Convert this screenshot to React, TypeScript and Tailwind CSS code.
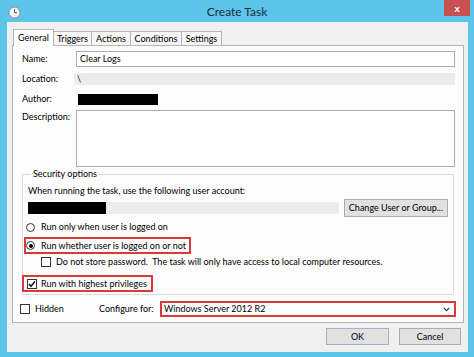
import { JSX } from "react";

function ClockIcon(): JSX.Element {
  return (
    <svg width="13" height="13" viewBox="0 0 13 13">
      <circle cx="6.5" cy="6.5" r="5.5" fill="#f4f4f4" stroke="#8a8a8a" strokeWidth="1" />
      <path d="M6.5 3.2 V6.7 H9" fill="none" stroke="#5a5a5a" strokeWidth="1" />
    </svg>
  );
}

function Radio({ checked }: { checked?: boolean }): JSX.Element {
  return (
    <span className="w-[9px] h-[9px] rounded-full border border-[#333] bg-white flex items-center justify-center shrink-0">
      {checked && <span className="w-[4px] h-[4px] rounded-full bg-black" />}
    </span>
  );
}

function Check({ checked }: { checked?: boolean }): JSX.Element {
  return (
    <span className="w-[10px] h-[10px] border border-[#333] bg-white flex items-center justify-center shrink-0">
      {checked && (
        <svg width="8" height="8" viewBox="0 0 8 8">
          <path d="M1 4 L3 6.3 L7 1.2" fill="none" stroke="#111" strokeWidth="1.4" />
        </svg>
      )}
    </span>
  );
}

export default function App(): JSX.Element {
  const tabs = [
    { label: "Triggers", w: "w-[39px]" },
    { label: "Actions", w: "w-[40px]" },
    { label: "Conditions", w: "w-[52px]" },
    { label: "Settings", w: "w-[41px]" },
  ];

  return (
    <div className="w-[474px] h-[357px] bg-[#5cc5e9] flex flex-col font-['Lato',sans-serif] text-[9px] text-black leading-[12px] whitespace-nowrap">
      {/* title bar */}
      <div className="h-[22px] grid grid-cols-[1fr_auto_1fr] items-start">
        <div className="pl-[8px] pt-[6px]">
          <ClockIcon />
        </div>
        <div className="pt-[4px] text-[12px] leading-[16px] text-[#1e2b38]">Create Task</div>
        <div className="flex justify-end pr-[4px]">
          <div className="w-[26px] h-[16px] bg-[#c75050] flex items-center justify-center text-white text-[10px] font-bold leading-none">
            x
          </div>
        </div>
      </div>

      {/* window body */}
      <div className="ml-[7px] mr-[6px] mb-[5px] flex-1 bg-[#f0f0f0] flex flex-col">
        {/* tabs */}
        <div className="flex items-end pl-[6px] pt-[6px] h-[23px]">
          <div className="w-[41px] h-[17px] bg-white border border-b-0 border-[#b4b4b4] flex items-center justify-center relative z-10 -mb-[1px]">
            General
          </div>
          {tabs.map((t) => (
            <div
              key={t.label}
              className={`${t.w} h-[14px] bg-[#f6f6f6] border border-b-0 border-[#b4b4b4] flex items-center justify-center -ml-[1px]`}
            >
              {t.label}
            </div>
          ))}
        </div>

        {/* tab panel */}
        <div className="ml-[5px] mr-[4px] h-[278px] bg-[#fcfcfc] border border-[#b4b4b4] flex flex-col pt-[5px]">
          <div className="grid grid-cols-[54px_1fr] pl-[9px] pr-[8px] gap-y-[6px]">
            <div className="flex items-center">Name:</div>
            <div className="h-[16px] bg-white border border-[#acacac] flex items-center pl-[3px]">Clear Logs</div>

            <div className="flex items-center">Location:</div>
            <div className="h-[12px] bg-[#ececec] -ml-[2px] flex items-center pl-[3px]">\</div>

            <div className="flex items-center h-[14px] mt-[1px]">Author:</div>
            <div className="h-[14px] mt-[1px] flex items-center pl-[2px]">
              <div className="w-[80px] h-[11px] bg-black" />
            </div>

            <div className="-mt-[2px] pt-[1px]">Description:</div>
            <div className="h-[57px] -mt-[2px] bg-white border border-[#acacac]" />
          </div>

          {/* security options */}
          <fieldset className="mx-[9px] mt-[1px] border border-[#dcdcdc] pl-[5px] pr-[5px] pb-[2px]">
            <legend className="ml-[3px] px-[2px]">Security options</legend>
            <div className="mt-[5px]">When running the task, use the following user account:</div>
            <div className="mt-[2px] h-[18px] flex items-center gap-[5px]">
              <div className="w-[311px] h-[12px] bg-[#ececec]">
                <div className="w-[78px] h-[12px] bg-black" />
              </div>
              <div className="w-[104px] h-[18px] bg-[#e1e1e1] border border-[#acacac] flex items-center justify-center">
                Change User or Group...
              </div>
            </div>
            <div className="mt-[3px] h-[14px] flex items-center gap-[6px] -ml-[2px]">
              <Radio />
              <span>Run only when user is logged on</span>
            </div>
            <div className="mt-[3px] h-[17px] w-fit -ml-[4px] pr-[3px] border-2 border-[#d9393b] flex items-center gap-[6px]">
              <Radio checked />
              <span>Run whether user is logged on or not</span>
            </div>
            <div className="mt-[2px] h-[12px] flex items-center gap-[5px] pl-[13px]">
              <Check />
              <span>Do not store password.&nbsp; The task will only have access to local computer resources.</span>
            </div>
            <div className="mt-[7px] h-[17px] w-fit -ml-[6px] pr-[4px] border-2 border-[#d9393b] flex items-center gap-[4px] pl-[3px]">
              <Check checked />
              <span>Run with highest privileges</span>
            </div>
          </fieldset>

          {/* bottom row */}
          <div className="mt-[6px] pl-[7px] pr-[7px] h-[16px] flex items-center">
            <Check />
            <span className="ml-[5px] w-[64px]">Hidden</span>
            <span className="w-[61px]">Configure for:</span>
            <div className="flex-1 h-[16px] bg-white border-2 border-[#d9393b] flex items-center justify-between pl-[2px] pr-[4px]">
              <span>Windows Server 2012 R2</span>
              <svg width="7" height="5" viewBox="0 0 7 5">
                <path d="M0.8 0.8 L3.5 3.6 L6.2 0.8" fill="none" stroke="#333" strokeWidth="1.1" />
              </svg>
            </div>
          </div>
        </div>

        {/* buttons */}
        <div className="mt-[5px] flex justify-end gap-[10px] pr-[7px]">
          <div className="w-[63px] h-[17px] bg-[#e1e1e1] border border-[#9db4cc] flex items-center justify-center">OK</div>
          <div className="w-[62px] h-[17px] bg-[#e1e1e1] border border-[#acacac] flex items-center justify-center">Cancel</div>
        </div>
      </div>
    </div>
  );
}
